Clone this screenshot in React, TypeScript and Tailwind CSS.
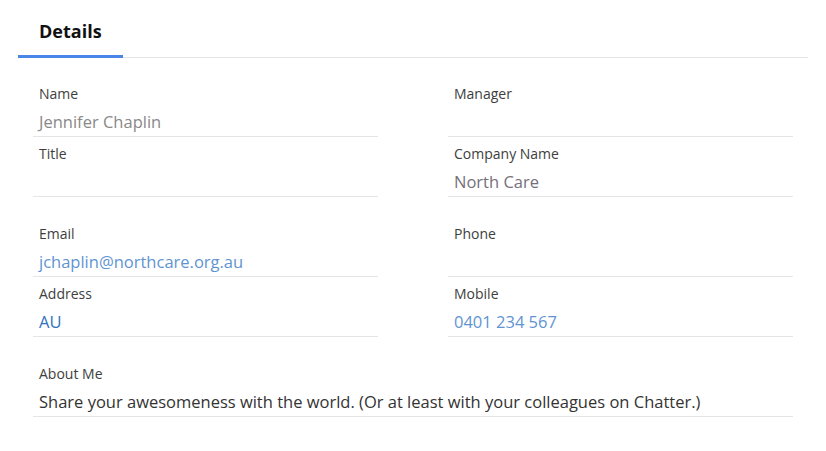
import type { ReactNode } from 'react'

type FieldProps = {
  label: string
  value?: ReactNode
  valueClass?: string
}

const Field = ({ label, value, valueClass = 'text-[#444]' }: FieldProps) => (
  <div className="flex h-[60px] flex-col border-b border-[#e5e5e5] px-[6px] pt-[7px]">
    <span className="text-[14px] leading-[20px] text-[#3e3e3c]">{label}</span>
    <span className={`mt-[6px] text-[16.5px] leading-[24px] ${valueClass}`}>{value}</span>
  </div>
)

export default function App() {
  return (
    <div className="min-h-screen bg-white pl-[18px] pr-[18px] pt-[17px]" style={{ fontFamily: '"Open Sans", "Noto Sans", sans-serif' }}>
      {/* Tabs */}
      <div className="flex border-b border-[#e5e5e5]">
        <div className="w-[105px] border-b-[3px] border-[#4a86e8] pb-[10px] pl-[21px] -mb-px">
          <span className="text-[18px] font-bold leading-[28px] text-[#111]">Details</span>
        </div>
      </div>

      <div className="pl-[15px] pr-[15px] pt-[19px]">
        <div className="grid w-[760px] grid-cols-2 gap-x-[70px]">
          <div className="flex flex-col">
            <Field label="Name" value="Jennifer Chaplin" valueClass="text-[#8a8888]" />
            <Field label="Title" />
          </div>
          <div className="flex flex-col">
            <Field label="Manager" />
            <Field label="Company Name" value="North Care" valueClass="text-[#76707a]" />
          </div>
        </div>

        <div className="mt-[20px] grid w-[760px] grid-cols-2 gap-x-[70px]">
          <div className="flex flex-col">
            <Field label="Email" value="jchaplin@northcare.org.au" valueClass="text-[#5f94d2]" />
            <Field label="Address" value="AU" valueClass="text-[#2f72c0]" />
          </div>
          <div className="flex flex-col">
            <Field label="Phone" />
            <Field label="Mobile" value="0401 234 567" valueClass="text-[#5f94d2]" />
          </div>
        </div>

        <div className="mt-[20px] w-[760px]">
          <Field
            label="About Me"
            value="Share your awesomeness with the world. (Or at least with your colleagues on Chatter.)"
            valueClass="text-[#333]"
          />
        </div>
      </div>
    </div>
  )
}
